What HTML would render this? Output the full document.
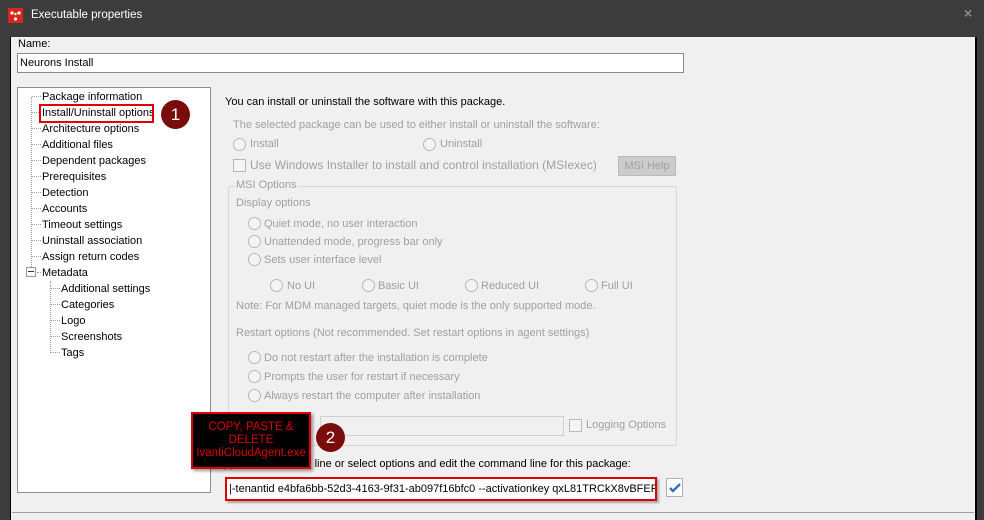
<!DOCTYPE html>
<html><head><meta charset="utf-8"><style>
*{margin:0;padding:0;box-sizing:border-box}
body{width:984px;height:520px;background:#3c3c3c;font-family:"Liberation Sans",sans-serif;font-size:11px;position:relative;overflow:hidden;color:#000}
.a{position:absolute;white-space:nowrap}
.g{color:#a0a0a0}
.r{position:absolute;width:13px;height:13px;border:1px solid #b8b8b8;border-radius:50%;background:#f4f4f4}
.c{position:absolute;width:13px;height:13px;border:1px solid #b8b8b8;background:#f4f4f4}
</style></head><body>
<div class="a" style="left:8px;top:8px;width:15px;height:15px;background:#d9261c"></div>
<svg class="a" style="left:8px;top:8px" width="15" height="15"><g fill="#fff"><circle cx="4" cy="5" r="1.6"/><circle cx="11" cy="5" r="1.6"/><circle cx="7.5" cy="11" r="1.6"/><circle cx="7.5" cy="6" r="1.2"/></g></svg>
<div class="a" style="left:31px;top:9px;color:#fff;font-size:11.5px">Executable properties</div>
<div class="a" style="left:964px;top:5px;color:#8a8a92;font-size:14px;font-weight:bold">×</div>
<div class="a" style="left:10px;top:37px;width:966px;height:483px;background:#f0f0f0;border-left:1px solid #000"></div>
<div class="a" style="left:975px;top:37px;width:2px;height:483px;background:#000"></div>
<div class="a" style="left:12px;top:512px;width:962px;height:1px;background:#a0a0a0"></div>
<div class="a" style="left:18px;top:38px">Name:</div>
<div class="a" style="left:17px;top:53px;width:667px;height:20px;background:#fff;border:1px solid #8a8a8a;padding:3px 2px">Neurons Install</div>
<div class="a" style="left:17px;top:87px;width:194px;height:406px;background:#fff;border:1px solid #8a8e98"></div>
<div class="a" style="left:31px;top:97px;height:176px;border-left:1px dotted #999"></div>
<div class="a" style="left:50px;top:281px;height:72px;border-left:1px dotted #999"></div>
<div class="a" style="left:26px;top:267px;width:10px;height:10px;border:1px solid #999;background:#fff"></div>
<div class="a" style="left:28px;top:271px;width:6px;height:1px;background:#333"></div>
<div id="tree"></div>
<script>
var t=["Package information","Install/Uninstall options","Architecture options","Additional files","Dependent packages","Prerequisites","Detection","Accounts","Timeout settings","Uninstall association","Assign return codes","Metadata"];
var s=["Additional settings","Categories","Logo","Screenshots","Tags"];var h="";
t.forEach(function(x,i){var y=96+i*16;h+='<div class="a" style="left:'+(i==11?37:32)+'px;top:'+y+'px;width:'+(i==11?4:9)+'px;border-top:1px dotted #999"></div><div class="a" style="left:42px;top:'+(y-5)+'px">'+x+'</div>';});
s.forEach(function(x,i){var y=288+i*16;h+='<div class="a" style="left:51px;top:'+y+'px;width:9px;border-top:1px dotted #999"></div><div class="a" style="left:61px;top:'+(y-5)+'px">'+x+'</div>';});
document.getElementById("tree").innerHTML=h;
</script>
<div class="a" style="left:39px;top:104px;width:115px;height:19px;border:2px solid #e00000"></div>
<div class="a" style="left:161px;top:100px;width:29px;height:29px;border-radius:50%;background:#7a0c0c;color:#fff;font-size:17px;text-align:center;line-height:29px">1</div>
<div class="a" style="left:225px;top:96px">You can install or uninstall the software with this package.</div>
<div class="a g" style="left:233px;top:119px">The selected package can be used to either install or uninstall the software:</div>
<div class="r" style="left:233px;top:138px"></div><div class="a g" style="left:250px;top:138px">Install</div>
<div class="r" style="left:423px;top:138px"></div><div class="a g" style="left:440px;top:138px">Uninstall</div>
<div class="c" style="left:233px;top:159px"></div><div class="a g" style="left:250px;top:158px;font-size:12px">Use Windows Installer to install and control installation (MSIexec)</div>
<div class="a" style="left:618px;top:156px;width:58px;height:20px;background:#cccccc;border:1px solid #bbb;color:#a0a0a0;text-align:center;line-height:18px">MSI Help</div>
<div class="a" style="left:228px;top:186px;width:449px;height:260px;border:1px solid #d8d8d8;border-radius:2px"></div>
<div class="a g" style="left:235px;top:179px;background:#f0f0f0;padding:0 1px">MSI Options</div>
<div class="a g" style="left:236px;top:197px">Display options</div>
<div class="r" style="left:248px;top:217px"></div><div class="a g" style="left:264px;top:218px">Quiet mode, no user interaction</div>
<div class="r" style="left:248px;top:235px"></div><div class="a g" style="left:264px;top:236px">Unattended mode, progress bar only</div>
<div class="r" style="left:248px;top:253px"></div><div class="a g" style="left:264px;top:254px">Sets user interface level</div>
<div class="r" style="left:270px;top:279px"></div><div class="a g" style="left:287px;top:280px">No UI</div>
<div class="r" style="left:362px;top:279px"></div><div class="a g" style="left:378px;top:280px">Basic UI</div>
<div class="r" style="left:465px;top:279px"></div><div class="a g" style="left:481px;top:280px">Reduced UI</div>
<div class="r" style="left:585px;top:279px"></div><div class="a g" style="left:601px;top:280px">Full UI</div>
<div class="a g" style="left:236px;top:300px">Note: For MDM managed targets, quiet mode is the only supported mode.</div>
<div class="a g" style="left:236px;top:327px">Restart options (Not recommended. Set restart options in agent settings)</div>
<div class="r" style="left:248px;top:351px"></div><div class="a g" style="left:264px;top:352px">Do not restart after the installation is complete</div>
<div class="r" style="left:248px;top:370px"></div><div class="a g" style="left:264px;top:371px">Prompts the user for restart if necessary</div>
<div class="r" style="left:248px;top:389px"></div><div class="a g" style="left:264px;top:390px">Always restart the computer after installation</div>
<div class="a" style="left:320px;top:416px;width:244px;height:20px;border:1px solid #d0d0d0;background:#f0f0f0"></div>
<div class="c" style="left:569px;top:419px"></div><div class="a g" style="left:586px;top:419px">Logging Options</div>
<div class="a" style="left:218px;top:458px">Type the command line or select options and edit the command line for this package:</div>
<div class="a" style="left:225px;top:477px;width:432px;height:24px;border:2px solid #e00000;background:#fff;box-shadow:2px 2px 2px rgba(0,0,0,.3);padding:4px 2px;overflow:hidden">|-tenantid e4bfa6bb-52d3-4163-9f31-ab097f16bfc0 --activationkey qxL81TRCkX8vBFERf</div>
<div class="a" style="left:666px;top:478px;width:17px;height:19px;border:1px solid #b0b0b0;background:#fff"></div>
<svg class="a" style="left:668px;top:481px" width="14" height="13"><path d="M2 7 L5 10 L12 3" stroke="#3a6fc0" stroke-width="2.5" fill="none"/></svg>
<div class="a" style="left:191px;top:412px;width:120px;height:57px;background:#000;border:2px solid #e00000;box-shadow:2px 2px 3px rgba(0,0,0,.4);color:#e00000;text-align:center;font-size:11.5px;line-height:13px;padding-top:7px;white-space:normal">COPY, PASTE &amp;<br>DELETE<br>IvantiCloudAgent.exe</div>
<div class="a" style="left:316px;top:423px;width:29px;height:29px;border-radius:50%;background:#7a0c0c;color:#fff;font-size:17px;text-align:center;line-height:29px">2</div>
</body></html>
